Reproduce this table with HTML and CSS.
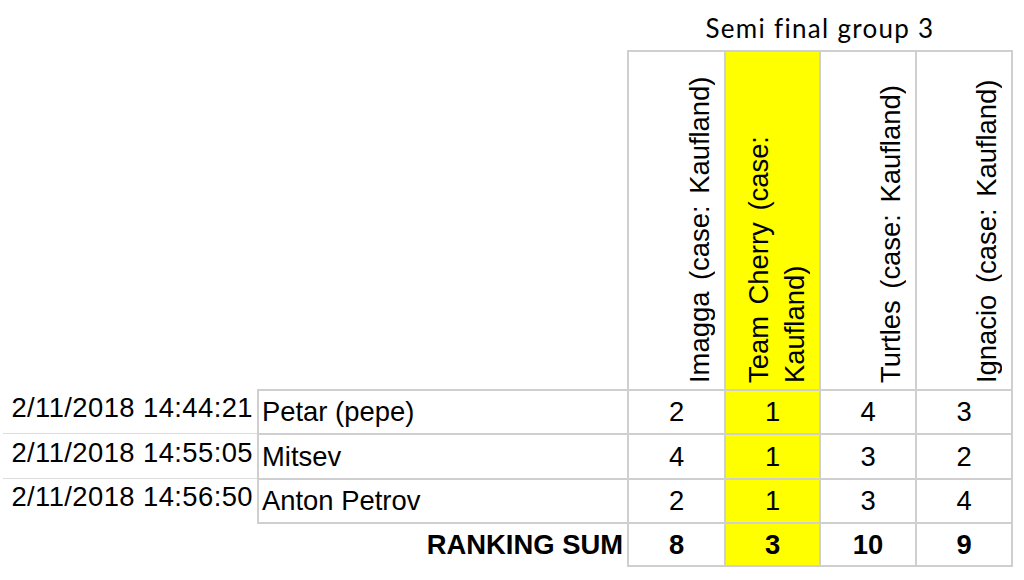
FILE: index.html
```html
<!DOCTYPE html>
<html lang="en">
<head>
<meta charset="utf-8">
<title>Semi final group 3</title>
<link rel="stylesheet" href="styles.css">
</head>
<body>
<div class="sheet">
  <div class="title">Semi final group 3</div>

  <div class="cell head first-team"><span class="vtext">Imagga (case: Kaufland)</span></div>
  <div class="cell head hl"><span class="vtext">Team Cherry (case: Kaufland)</span></div>
  <div class="cell head"><span class="vtext">Turtles (case: Kaufland)</span></div>
  <div class="cell head last"><span class="vtext">Ignacio (case: Kaufland)</span></div>

  <div class="date">2/11/2018 14:44:21</div>
  <div class="cell name">Petar (pepe)</div>
  <div class="cell num">2</div>
  <div class="cell num hl">1</div>
  <div class="cell num">4</div>
  <div class="cell num last">3</div>

  <div class="date lined">2/11/2018 14:55:05</div>
  <div class="cell name">Mitsev</div>
  <div class="cell num">4</div>
  <div class="cell num hl">1</div>
  <div class="cell num">3</div>
  <div class="cell num last">2</div>

  <div class="date lined">2/11/2018 14:56:50</div>
  <div class="cell name">Anton Petrov</div>
  <div class="cell num">2</div>
  <div class="cell num hl">1</div>
  <div class="cell num">3</div>
  <div class="cell num last">4</div>

  <div class="date"></div>
  <div class="sum-label">RANKING SUM</div>
  <div class="cell num sum">8</div>
  <div class="cell num sum hl">3</div>
  <div class="cell num sum">10</div>
  <div class="cell num sum last">9</div>
</div>
</body>
</html>
```

FILE: styles.css
```css
* {
  box-sizing: border-box;
}

body {
  margin: 0;
  background: #ffffff;
  color: #000000;
  font-family: "Liberation Sans", Arial, sans-serif;
}

.sheet {
  display: grid;
  grid-template-columns: 254px 370px 97px 95px 96px 98px;
  grid-template-rows: 50px 339px 44px 45px 44px 45px;
  padding-left: 3px;
  font-size: 27.4px;
  line-height: 31px;
}

.title {
  grid-column: 3 / 7;
  display: flex;
  justify-content: center;
  align-items: flex-end;
  padding-bottom: 10px;
  font-family: Lato, "Open Sans", sans-serif;
  font-size: 26px;
  line-height: 24px;
  letter-spacing: 1.3px;
}

.cell {
  display: flex;
  align-items: flex-end;
  border-left: 2px solid #cfcfcf;
  border-top: 2px solid #cfcfcf;
  padding-bottom: 6px;
}

.last {
  border-right: 2px solid #cfcfcf;
}

.hl {
  background: #ffff00;
}

.head {
  align-items: stretch;
  justify-content: flex-end;
  padding-right: 6px;
}

.first-team {
  grid-column-start: 3;
}

.vtext {
  writing-mode: vertical-rl;
  transform: rotate(180deg);
  line-height: 36px;
  word-spacing: 4px;
}

.date {
  display: flex;
  align-items: flex-end;
  justify-content: flex-end;
  padding-right: 4px;
  padding-bottom: 10px;
  letter-spacing: 0.42px;
}

.date.lined {
  border-top: 1px solid #dcdcdc;
}

.name {
  padding-left: 3px;
}

.num {
  justify-content: center;
}

.sum {
  font-weight: bold;
  border-bottom: 2px solid #cfcfcf;
  padding-bottom: 5px;
}

.sum-label {
  display: flex;
  align-items: flex-end;
  justify-content: flex-end;
  border-top: 2px solid #cfcfcf;
  padding-right: 4px;
  padding-bottom: 7px;
  font-weight: bold;
}
```
